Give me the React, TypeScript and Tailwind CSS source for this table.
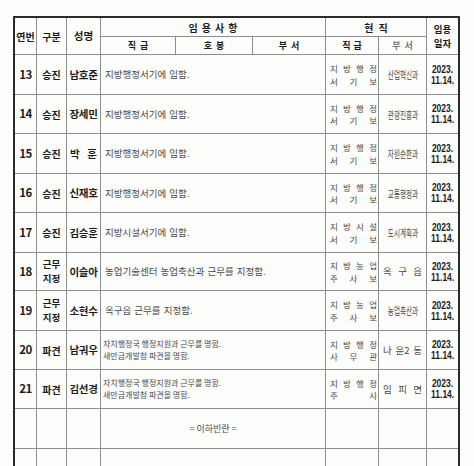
import React from "react";

type Row = {
  no: string;
  kind: string[];
  name: string[];
  text: string[];
  small?: boolean;
  rank: [string[], string[]];
  dept: string[];
};

const rows: Row[] = [
  { no: "13", kind: ["승진"], name: ["남호준"], text: ["지방행정서기에 임함."], rank: [["지", "방", "행", "정"], ["서", "기", "보"]], dept: ["산업혁신과"] },
  { no: "14", kind: ["승진"], name: ["장세민"], text: ["지방행정서기에 임함."], rank: [["지", "방", "행", "정"], ["서", "기", "보"]], dept: ["관광진흥과"] },
  { no: "15", kind: ["승진"], name: ["박", "훈"], text: ["지방행정서기에 임함."], rank: [["지", "방", "행", "정"], ["서", "기", "보"]], dept: ["자원순환과"] },
  { no: "16", kind: ["승진"], name: ["신재호"], text: ["지방행정서기에 임함."], rank: [["지", "방", "행", "정"], ["서", "기", "보"]], dept: ["교통행정과"] },
  { no: "17", kind: ["승진"], name: ["김승훈"], text: ["지방시설서기에 임함."], rank: [["지", "방", "시", "설"], ["서", "기", "보"]], dept: ["도시계획과"] },
  { no: "18", kind: ["근무", "지정"], name: ["이슬아"], text: ["농업기술센터 농업축산과 근무를 지정함."], rank: [["지", "방", "농", "업"], ["주", "사", "보"]], dept: ["옥", "구", "읍"] },
  { no: "19", kind: ["근무", "지정"], name: ["소현수"], text: ["옥구읍 근무를 지정함."], rank: [["지", "방", "농", "업"], ["주", "사", "보"]], dept: ["농업축산과"] },
  { no: "20", kind: ["파견"], name: ["남궈우"], text: ["자치행정국 행정지원과 근무를 명함.", "새만금개발청 파견을 명함."], small: true, rank: [["지", "방", "행", "정"], ["사", "무", "관"]], dept: ["나", "운2", "동"] },
  { no: "21", kind: ["파견"], name: ["김선경"], text: ["자치행정국 행정지원과 근무를 명함.", "새만금개발청 파견을 명함."], small: true, rank: [["지", "방", "행", "정"], ["주", "사"]], dept: ["임", "피", "면"] },
];

const c = "bg-[#fdfdfc] flex items-center justify-center";
const body = "text-[#4a4a4a]";

export default function App() {
  return (
    <div className="w-[474px] h-[466px] overflow-hidden bg-[#fdfdfc] pl-[13px] pt-[16px] font-['Noto_Sans_CJK_KR',sans-serif] text-[#1b1b1b]">
      <div className="w-[447px] border-2 border-b-0 border-[#2b2b2b] bg-[#8e8e8e]">
        <div className="grid gap-px grid-cols-[21px_29px_33px_74px_76px_72px_52px_47px_31px] grid-rows-[18px_17px_39px_38px_39px_38px_39px_37px_39px_38px_38px_39px_40px]">
          {/* header */}
          <div className={`${c} row-span-2 text-[10px] font-bold`}>연번</div>
          <div className={`${c} row-span-2 text-[10px] font-bold`}>구분</div>
          <div className={`${c} row-span-2 text-[10.5px] font-bold`}>성명</div>
          <div className={`${c} col-span-3 text-[10px] font-bold tracking-[4px] pl-[4px]`}>임용사항</div>
          <div className={`${c} col-span-2 text-[10px] font-bold tracking-[5px] pl-[5px]`}>현직</div>
          <div className={`${c} row-span-2 flex-col text-[9.5px] font-bold leading-[14px]`}>
            <span>임용</span>
            <span>일자</span>
          </div>
          <div className={`${c} text-[9px] font-bold tracking-[4px] pl-[4px]`}>직급</div>
          <div className={`${c} text-[9px] font-bold tracking-[4px] pl-[4px]`}>호봉</div>
          <div className={`${c} text-[9px] font-bold tracking-[4px] pl-[4px]`}>부서</div>
          <div className={`${c} text-[9px] font-bold tracking-[3px] pl-[3px]`}>직급</div>
          <div className={`${c} text-[9px] font-bold tracking-[4px] pl-[4px] text-[#777]`}>부서</div>

          {rows.map((r) => (
            <React.Fragment key={r.no}>
              <div className={`${c} text-[11.5px] font-bold tracking-[-0.5px]`}>{r.no}</div>
              <div className={`${c} flex-col font-bold ${r.kind.length > 1 ? "text-[9.5px] leading-[13.8px]" : "text-[10px]"}`}>
                {r.kind.map((k) => (
                  <span key={k}>{k}</span>
                ))}
              </div>
              {r.name.length > 1 ? (
                <div className="bg-[#fdfdfc] flex items-center justify-between px-[3px] text-[10.5px] font-bold">
                  {r.name.map((n) => (
                    <span key={n}>{n}</span>
                  ))}
                </div>
              ) : (
                <div className={`${c} text-[10.5px] font-bold tracking-[-0.3px]`}>{r.name[0]}</div>
              )}
              <div className={`bg-[#fdfdfc] col-span-3 flex flex-col justify-center ${body} ${r.small ? "text-[8px] leading-[12px] pl-[2px]" : "text-[9.5px] pl-[4px] [word-spacing:1px]"}`}>
                {r.text.map((t) => (
                  <span key={t}>{t}</span>
                ))}
              </div>
              <div className={`bg-[#fdfdfc] flex flex-col justify-center pl-[4px] pr-[1px] text-[8.5px] leading-[12.4px] ${body}`}>
                <div className="flex justify-between">
                  {r.rank[0].map((x, i) => (
                    <span key={i}>{x}</span>
                  ))}
                </div>
                <div className="flex justify-between">
                  {r.rank[1].map((x, i) => (
                    <span key={i}>{x}</span>
                  ))}
                </div>
              </div>
              {r.dept.length > 1 ? (
                <div className={`bg-[#fdfdfc] flex items-center justify-between px-[4px] text-[9.5px] ${body}`}>
                  {r.dept.map((x, i) => (
                    <span key={i}>{x}</span>
                  ))}
                </div>
              ) : (
                <div className={`${c} text-[10px] ${body}`}>
                  <span className="inline-block scale-x-[0.66] whitespace-nowrap">{r.dept[0]}</span>
                </div>
              )}
              <div className={`${c} flex-col font-['Liberation_Sans',sans-serif] text-[10px] font-bold leading-[11px]`}>
                <span className="inline-block scale-x-[0.85]">2023.</span>
                <span className="inline-block scale-x-[0.85]">11.14.</span>
              </div>
            </React.Fragment>
          ))}

          {/* empty rows */}
          <div className={c}></div>
          <div className={c}></div>
          <div className={c}></div>
          <div className={`${c} col-span-3 text-[9px] ${body}`}>= 이하빈란 =</div>
          <div className={c}></div>
          <div className={c}></div>
          <div className={c}></div>

          <div className={c}></div>
          <div className={c}></div>
          <div className={c}></div>
          <div className={`${c} col-span-3`}></div>
          <div className={c}></div>
          <div className={c}></div>
          <div className={c}></div>
        </div>
      </div>
    </div>
  );
}
